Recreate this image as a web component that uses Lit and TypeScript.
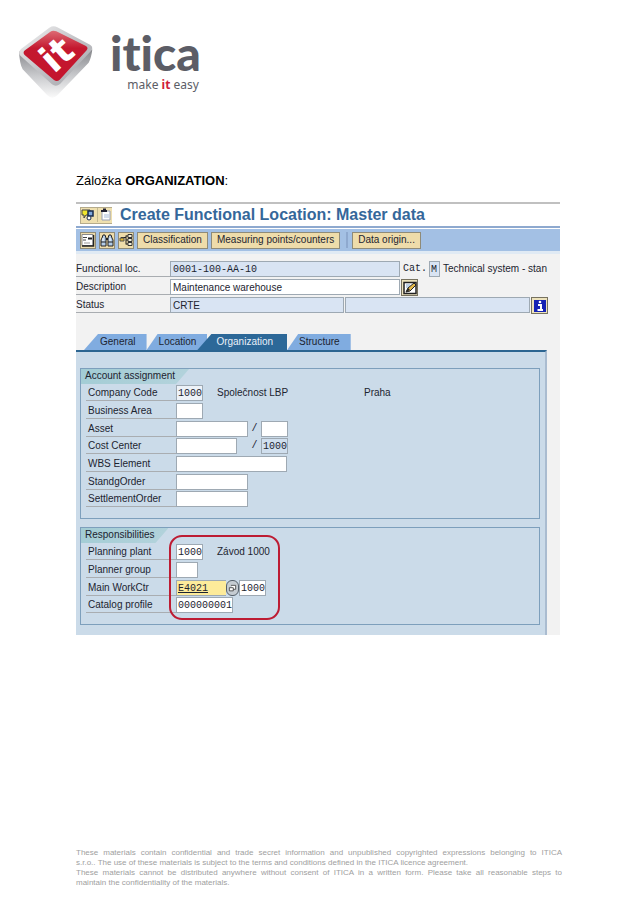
import { LitElement, html, css, svg, nothing } from "lit";
import { customElement } from "lit/decorators.js";
import { classMap } from "lit/directives/class-map.js";

interface Field {
  size: string;
  value?: string;
  readonly?: boolean;
}

const iconServices = svg`
  <path d="M1 2h8v5H5l-2 3V7H1z" fill="#f0e62c" stroke="#444" />
  <path d="M7 3h5v5H7z" fill="#7fa8dc" stroke="#16294c" stroke-width="1.500" />
  <circle cx="8" cy="10" r="2" fill="#fff" stroke="#16294c" />`;
const iconClipboard = svg`
  <path d="M4 3h8v9H4z" fill="#fff" stroke="#98a0b4" />
  <path d="M3 3h6M5 1.500h3" stroke="#223" stroke-width="2" />
  <path d="M6 7h5M6 9h5" stroke="#a9bddb" />`;
const iconPage = svg`
  <path d="M1 1.500h11v11H1z" fill="#fff" stroke="#888" />
  <path d="M12.500 2v11H1" stroke="#222" stroke-width="1.500" />
  <path d="M2 4.500h4M2 7h3" stroke="#444" />
  <path d="M7 5.500h4" stroke="#222" stroke-width="2" />
  <path d="M3 10h6" stroke="#999" />`;
const iconBinoculars = svg`
  <path d="M2 5l1-3h2l1 3v8H1V7zM8 5l1-3h2l1 3 1 2v6H8z" fill="#b3cde8" stroke="#222" />
  <path d="M1 9h5M8 9h5" stroke="#222" />
  <path d="M3 5v3M10 5v3" stroke="#fff" />
  <path d="M6 6h2" stroke="#222" stroke-width="2" />`;
const iconTree = svg`
  <path d="M2 4.500h5M7 2.500v9M7 3h3M7 7h3M7 11h3" stroke="#222" fill="none" />
  <path d="M1 5h4v3H1z" fill="#e0b428" stroke="#555" />
  <path d="M9 1.500h4v3H9zM9 5.500h4v3H9zM9 9.500h4v3H9z" fill="#f4f0dc" stroke="#333" />`;
const iconEdit = svg`
  <path d="M1 1.500h12v11H1z" fill="#fff" stroke="#222" stroke-width="1.500" />
  <path d="M3 4h4M3 6h3" stroke="#7fa3cc" />
  <path d="M3 11l2-4 6-5 2 2-6 6z" fill="#e5b94a" stroke="#222" />
  <path d="M3 11l2-4 2 2z" fill="#222" />`;
const iconInfo = svg`
  <path d="M1 1h12v12H1z" fill="#1522b4" />
  <path d="M5 6h3v5M4.500 11h5.500" stroke="#fff" stroke-width="2" fill="none" />
  <circle cx="7" cy="3" r="1.300" fill="#fff" />`;
const iconMatch = svg`
  <path d="M5 3h6v5H8M3 6h5v4H3z" fill="#fff" stroke="#333" />`;

const icon = (shape: unknown) =>
  html`<svg class="icon" viewBox="0 0 14 14" aria-hidden="true">${shape}</svg>`;

@customElement("app-root")
export class AppRoot extends LitElement {
  static styles = css`
    :host {
      display: block;
      min-height: 100vh;
      background: #fff;
      font-family: "Liberation Sans", Arial, sans-serif;
      color: #1c2430;
    }
    * {
      box-sizing: border-box;
    }
    .page {
      display: flex;
      flex-direction: column;
      min-height: 100vh;
      padding: 24px 76px 15px;
    }
    .brand {
      display: flex;
      gap: 15px;
      margin-left: -58px;
      height: 76px;
    }
    .cube {
      width: 77px;
      height: 76px;
    }
    .cube text {
      font-family: "DejaVu Sans", sans-serif;
      font-weight: 700;
      font-size: 112px;
      fill: #fff;
    }
    .words {
      display: flex;
      flex-direction: column;
      align-items: flex-end;
      font-family: Lato, "Open Sans", sans-serif;
      color: #5c5d66;
    }
    .name {
      font-size: 48px;
      line-height: 50px;
      font-weight: 900;
      font-variant-ligatures: none;
      margin-top: 4px;
    }
    .motto {
      font-family: "Noto Sans", "Open Sans", sans-serif;
      font-size: 12px;
      line-height: 14px;
      padding-right: 2px;
    }
    .motto b {
      color: #cf1f3a;
    }
    h1 {
      margin: 73px 0 14px;
      font-size: 13px;
      line-height: 15px;
      font-weight: 400;
      color: #000;
    }
    .window {
      margin-right: 2px;
      background: #f2f2f2;
      border-top: 2px solid #c0c0c0;
      font-size: 10px;
      line-height: 12px;
    }
    .title {
      display: flex;
      align-items: center;
      gap: 8px;
      height: 24px;
      padding-left: 4px;
      background: #fff;
      border-bottom: 2px solid #8ea9cf;
    }
    .title h2 {
      margin: 0;
      font-size: 16px;
      line-height: 20px;
      color: #35679a;
    }
    .modes {
      display: flex;
      gap: 2px;
      height: 17px;
      width: 32px;
      align-items: center;
      background: #eedfae;
      border: 1px solid #b5ab8b;
      border-right: 0;
    }
    button {
      font: inherit;
      color: inherit;
      margin: 0;
      padding: 0;
    }
    .modes button {
      display: flex;
      background: none;
      border: 0;
    }
    .modes button + button {
      border-left: 1px solid #c4b98f;
    }
    .icon {
      display: block;
      width: 14px;
      height: 14px;
      fill: none;
    }
    .toolbar {
      display: flex;
      align-items: center;
      gap: 3px;
      height: 26px;
      padding: 0 4px;
      background: #a3c0e4;
      border-top: 1px solid #fff;
      border-bottom: 3px solid #e0eaf4;
    }
    .tool {
      display: flex;
      align-items: center;
      justify-content: center;
      height: 17px;
      padding: 0 5px;
      background: #eedcaa;
      border: 1px solid #8f8b78;
      white-space: nowrap;
    }
    .tool.square {
      width: 16px;
      padding: 0;
    }
    .sep {
      width: 2px;
      height: 16px;
      margin: 0 1px 0 3px;
      background: #8ea9cf;
    }
    .rows {
      display: grid;
      grid-auto-rows: 18px 18px 17px;
    }
    .row {
      display: flex;
      align-items: flex-start;
    }
    .head {
      padding: 7px 12px 0 0;
    }
    label {
      flex: none;
      width: 94px;
      height: 16px;
      line-height: 15px;
      border-bottom: 1px solid #a9adb1;
      white-space: nowrap;
    }
    .group label {
      width: 90px;
      padding-left: 2px;
    }
    input {
      display: block;
      height: 16px;
      margin: 0;
      padding: 0 2px;
      border: 1px solid #9ea9b3;
      border-radius: 0;
      background: #fff;
      color: #1c2430;
      font: 10px/14px "Liberation Mono", "Courier New", monospace;
      outline: 0;
    }
    .head input {
      font-family: "Liberation Sans", Arial, sans-serif;
    }
    .head input.code {
      font-family: "Liberation Mono", monospace;
    }
    input[readonly] {
      background: #d9e4f3;
    }
    .group input {
      padding: 0 0 0 1px;
    }
    .group input[readonly] {
      background: #d0dfee;
    }
    .group input.pale {
      background: #edf2f8;
    }
    .w-long {
      width: 230px;
    }
    .w-half {
      width: 174px;
      margin-right: 1px;
    }
    .w-fill {
      flex: 1;
      min-width: 0;
    }
    .w-4 {
      width: 27px;
    }
    .w-3 {
      width: 22px;
    }
    .w-9 {
      width: 57px;
    }
    .w-10 {
      width: 61px;
    }
    .w-12 {
      width: 72px;
    }
    .w-18 {
      width: 111px;
    }
    .w-8 {
      width: 50px;
    }
    .head .w-1 {
      width: 11px;
      padding: 0 1px;
      margin-right: 3px;
    }
    .mono {
      font-family: "Liberation Mono", monospace;
      line-height: 16px;
      padding: 0 2px 0 3px;
    }
    .plain {
      line-height: 16px;
      white-space: nowrap;
    }
    .boxed {
      display: flex;
      align-items: center;
      justify-content: center;
      width: 17px;
      height: 17px;
      margin-left: 1px;
      background: #ece2bc;
      border: 1px solid #77725f;
    }
    .tabs {
      display: flex;
      margin-top: 20px;
      padding-left: 8px;
    }
    .tab {
      height: 16px;
      padding: 0 11px 0 16px;
      border: 0;
      background: #80ace0;
      clip-path: polygon(14px 0, 100% 0, 100% 100%, 0 100%);
      white-space: nowrap;
    }
    .tab + .tab {
      padding-left: 12px;
      clip-path: polygon(11px 0, 100% 0, 100% 100%, 0 100%);
    }
    .tab + .tab.current {
      margin-left: -10px;
      padding: 0 14px 0 19px;
      clip-path: polygon(14px 0, 100% 0, 100% 100%, 0 100%);
      background: #2c6898;
      color: #e8f0f8;
    }
    .sheet {
      display: grid;
      gap: 8px;
      margin-right: 13px;
      padding: 16px 5px 10px 4px;
      background: #cbdbe9;
      border-top: 2px solid #2c6591;
      border-right: 2px solid #aabcd0;
    }
    .group {
      position: relative;
      margin: 0;
      padding: 0 0 9px 5px;
      border: 1px solid #7d9fbc;
      min-width: 0;
    }
    .group h3 {
      margin: 0 0 1px -5px;
      padding-left: 4px;
      height: 15px;
      font-size: 10px;
      line-height: 14px;
      font-weight: 400;
      width: max-content;
      padding-right: 14px;
      background: linear-gradient(135deg, #a2ccd4, #b4d3dc);
      clip-path: polygon(0 0, 100% 0, calc(100% - 13px) 100%, 0 100%);
    }
    .slash {
      width: 13px;
      line-height: 16px;
      text-align: center;
      font-family: "Liberation Mono", monospace;
    }
    .slash.far {
      width: 24px;
      padding-left: 11px;
    }
    .note {
      width: 147px;
      margin-left: 14px;
      line-height: 16px;
      white-space: nowrap;
    }
    .group input.active {
      background: #fdeb9a;
      text-decoration: underline;
      border-right: 0;
    }
    .match {
      display: flex;
      align-items: center;
      justify-content: center;
      width: 13px;
      height: 16px;
      border: 1px solid #55606b;
      border-radius: 6px;
      background: #c5ccd2;
    }
    .match .icon {
      width: 11px;
      height: 11px;
    }
    .marker {
      position: absolute;
      left: 88px;
      top: 7px;
      width: 111px;
      height: 85px;
      border: 2px solid #bd1c33;
      border-radius: 13px;
      pointer-events: none;
    }
    footer {
      margin-top: auto;
      font-size: 8px;
      line-height: 10px;
      color: #a0a0a0;
    }
    footer p {
      margin: 0;
    }
    .full {
      display: block;
      text-align: justify;
      text-align-last: justify;
    }
  `;

  private row(id: string, label: string, fields: Field[], extra: unknown = nothing) {
    return html`<div class="row">
      <label for=${id}>${label}</label>
      ${fields.map(
        (f, i) => html`${i > 0
            ? html`<span class=${classMap({ slash: true, far: fields[0].size === "w-10" })}>/</span>`
            : nothing}<input
            id=${i === 0 ? id : `${id}-${i}`}
            aria-label=${label}
            class=${f.size}
            .value=${f.value ?? ""}
            ?readonly=${f.readonly ?? false}
          />`
      )}${extra}
    </div>`;
  }

  render() {
    return html`<div class="page">
      <header class="brand">
        <svg class="cube" viewBox="24 26 231 228" role="img" aria-label="itica">
          <defs>
            <linearGradient id="top" x1="0" y1="0" x2="1" y2="1">
              <stop offset="0" stop-color="#f4f4f4" />
              <stop offset="0.5" stop-color="#c2c2c6" />
              <stop offset="1" stop-color="#a4a5aa" />
            </linearGradient>
            <linearGradient id="side" x1="0" y1="0" x2="0" y2="1">
              <stop offset="0" stop-color="#85868a" />
              <stop offset="0.550" stop-color="#c9cacd" />
              <stop offset="1" stop-color="#fafafa" />
            </linearGradient>
            <linearGradient id="red" x1="0" y1="0" x2="0" y2="1">
              <stop offset="0" stop-color="#dd6b74" />
              <stop offset="0.350" stop-color="#c4182f" />
              <stop offset="1" stop-color="#c4142d" />
            </linearGradient>
          </defs>
          <path d="M27 108 Q29 148 38 162 L112 240 Q127 254 142 240 L236 142 Q244 128 247 102 L138 190z" fill="url(#side)" />
          <path d="M118 37 Q130 29 142 36 L240 88 Q252 96 243 107 L150 206 Q138 216 126 207 L32 122 Q22 112 33 101z" fill="url(#top)" />
          <path d="M120 50 Q129 43 139 48 L228 92 Q236 97 230 105 L149 193 Q141 200 132 194 L44 119 Q37 111 45 105z" fill="url(#red)" />
          <text x="0" y="0" transform="translate(132 177) rotate(-42)">it</text>
        </svg>
        <div class="words">
          <div class="name">itica</div>
          <div class="motto">make <b>it</b> easy</div>
        </div>
      </header>

      <h1>Záložka <b>ORGANIZATION</b>:</h1>

      <main class="window">
        <div class="title">
          <div class="modes">
            <button aria-label="Services">${icon(iconServices)}</button>
            <button aria-label="Clipboard">${icon(iconClipboard)}</button>
          </div>
          <h2>Create Functional Location: Master data</h2>
        </div>
        <div class="toolbar">
          <button class="tool square" aria-label="Overview">${icon(iconPage)}</button>
          <button class="tool square" aria-label="Find">${icon(iconBinoculars)}</button>
          <button class="tool square" aria-label="Hierarchy">${icon(iconTree)}</button>
          <button class="tool">Classification</button>
          <button class="tool">Measuring points/counters</button>
          <span class="sep"></span>
          <button class="tool">Data origin...</button>
        </div>

        <div class="rows head">
          <div class="row">
            <label for="loc">Functional loc.</label>
            <input id="loc" class="w-long code" value="0001-100-AA-10" readonly />
            <span class="mono">Cat.</span>
            <input class="w-1 code" aria-label="Category" value="M" readonly />
            <span class="plain">Technical system - stan</span>
          </div>
          <div class="row">
            <label for="desc">Description</label>
            <input id="desc" class="w-long" value="Maintenance warehouse" />
            <button class="boxed" aria-label="Edit long text">${icon(iconEdit)}</button>
          </div>
          <div class="row">
            <label for="status">Status</label>
            <input id="status" class="w-half" value="CRTE" readonly />
            <input class="w-fill" aria-label="User status" readonly />
            <button class="boxed" aria-label="Status information">${icon(iconInfo)}</button>
          </div>
        </div>

        <nav class="tabs">
          <button class="tab">General</button>
          <button class="tab">Location</button>
          <button class="tab current">Organization</button>
          <button class="tab">Structure</button>
        </nav>

        <div class="sheet">
          <section class="group">
            <h3>Account assignment</h3>
            <div class="rows">
              ${this.row(
                "company",
                "Company Code",
                [{ size: "w-4 pale", value: "1000", readonly: true }],
                html`<span class="note">Společnost LBP</span><span class="plain">Praha</span>`
              )}
              ${this.row("area", "Business Area", [{ size: "w-4" }])}
              ${this.row("asset", "Asset", [{ size: "w-12" }, { size: "w-4" }])}
              ${this.row("cost", "Cost Center", [
                { size: "w-10" },
                { size: "w-4", value: "1000", readonly: true },
              ])}
              ${this.row("wbs", "WBS Element", [{ size: "w-18" }])}
              ${this.row("standing", "StandgOrder", [{ size: "w-12" }])}
              ${this.row("settlement", "SettlementOrder", [{ size: "w-12" }])}
            </div>
          </section>

          <section class="group">
            <h3>Responsibilities</h3>
            <div class="rows">
              ${this.row(
                "plant",
                "Planning plant",
                [{ size: "w-4", value: "1000" }],
                html`<span class="note">Závod 1000</span>`
              )}
              ${this.row("planner", "Planner group", [{ size: "w-3" }])}
              ${this.row(
                "center",
                "Main WorkCtr",
                [{ size: "w-8 active", value: "E4021" }],
                html`<button class="match" aria-label="Possible entries">${icon(iconMatch)}</button
                  ><input class="w-4" aria-label="Work center plant" value="1000" />`
              )}
              ${this.row("profile", "Catalog profile", [{ size: "w-9", value: "000000001" }])}
            </div>
            <div class="marker"></div>
          </section>
        </div>
      </main>

      <footer>
        <p>
          <span class="full"
            >These materials contain confidential and trade secret information and unpublished
            copyrighted expressions belonging to ITICA</span
          >
          s.r.o.. The use of these materials is subject to the terms and conditions defined in the
          ITICA licence agreement.
        </p>
        <p>
          <span class="full"
            >These materials cannot be distributed anywhere without consent of ITICA in a written
            form. Please take all reasonable steps to</span
          >
          maintain the confidentiality of the materials.
        </p>
      </footer>
    </div>`;
  }
}
